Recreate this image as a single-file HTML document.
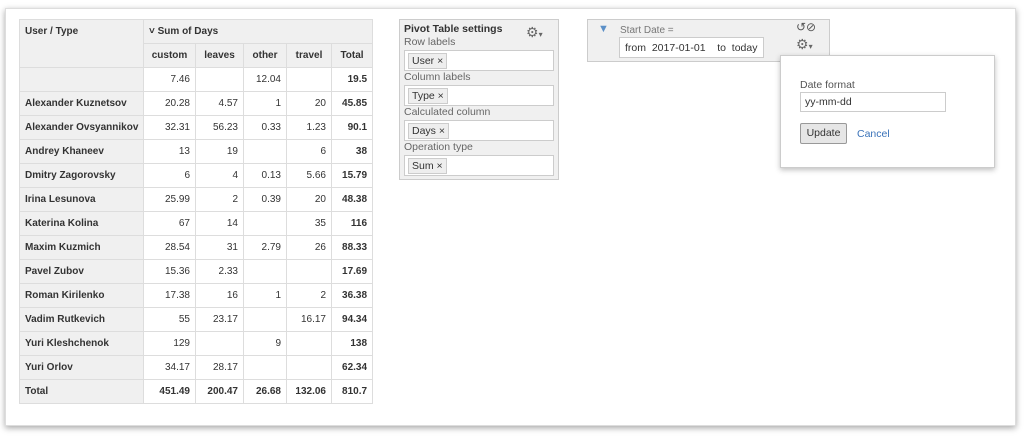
<!DOCTYPE html><html><head><style>
body{margin:0;width:1024px;height:443px;background:#fff;font-family:"Liberation Sans",sans-serif;font-size:10px;color:#333;position:relative;overflow:hidden}
.card{position:absolute;left:5px;top:8px;width:1009px;height:416px;background:#fff;box-shadow:0 2px 6px rgba(0,0,0,.35);border:1px solid #ddd}
table{position:absolute;left:19px;top:19px;border-collapse:collapse;table-layout:fixed;width:353px}
td{border:1px solid #ddd;height:23px;padding:0 5px;text-align:right;white-space:nowrap;overflow:hidden;font-size:10px}
td.h{background:#f0f0f0;font-weight:bold;text-align:left}
td.c{background:#f0f0f0;font-weight:bold;text-align:center;padding:0 2px}
td.b{font-weight:bold}
.set{position:absolute;left:399px;top:19px;width:160px;height:161px;background:#f0f0f0;border:1px solid #ccc;box-sizing:border-box;padding:3px 4px}
.set .t{font-weight:bold;font-size:10.5px;line-height:13px}
.set .l{color:#666;font-size:10.5px;line-height:13px;margin:0 0 1px}
.set .in{background:#fff;border:1px solid #ccc;height:21px;box-sizing:border-box;padding:2px 3px}
.tag{display:inline-block;background:#eee;border:1px solid #ccc;padding:0 3px;font-size:10.5px;line-height:14px;color:#333}
.gear{position:absolute;font-size:14px;color:#666}
.flt{position:absolute;left:587px;top:19px;width:243px;height:43px;background:#f0f0f0;border:1px solid #ccc;box-sizing:border-box}
.pop{position:absolute;left:780px;top:55px;width:215px;height:113px;background:#fff;border:1px solid #ccc;box-shadow:0 2px 5px rgba(0,0,0,.25);box-sizing:border-box}
</style></head><body>
<div class="card"></div>
<table>
<colgroup><col style="width:124px"><col style="width:52px"><col style="width:48px"><col style="width:43px"><col style="width:45px"><col style="width:41px"></colgroup>
<tr><td class="h" rowspan="2" style="vertical-align:top;padding-top:6px">User / Type</td><td class="h" colspan="5">˅ Sum of Days</td></tr>
<tr><td class="c">custom</td><td class="c">leaves</td><td class="c">other</td><td class="c">travel</td><td class="c">Total</td></tr>
<tr><td class="h"></td><td>7.46</td><td></td><td>12.04</td><td></td><td class="b">19.5</td></tr>
<tr><td class="h">Alexander Kuznetsov</td><td>20.28</td><td>4.57</td><td>1</td><td>20</td><td class="b">45.85</td></tr>
<tr><td class="h">Alexander Ovsyannikov</td><td>32.31</td><td>56.23</td><td>0.33</td><td>1.23</td><td class="b">90.1</td></tr>
<tr><td class="h">Andrey Khaneev</td><td>13</td><td>19</td><td></td><td>6</td><td class="b">38</td></tr>
<tr><td class="h">Dmitry Zagorovsky</td><td>6</td><td>4</td><td>0.13</td><td>5.66</td><td class="b">15.79</td></tr>
<tr><td class="h">Irina Lesunova</td><td>25.99</td><td>2</td><td>0.39</td><td>20</td><td class="b">48.38</td></tr>
<tr><td class="h">Katerina Kolina</td><td>67</td><td>14</td><td></td><td>35</td><td class="b">116</td></tr>
<tr><td class="h">Maxim Kuzmich</td><td>28.54</td><td>31</td><td>2.79</td><td>26</td><td class="b">88.33</td></tr>
<tr><td class="h">Pavel Zubov</td><td>15.36</td><td>2.33</td><td></td><td></td><td class="b">17.69</td></tr>
<tr><td class="h">Roman Kirilenko</td><td>17.38</td><td>16</td><td>1</td><td>2</td><td class="b">36.38</td></tr>
<tr><td class="h">Vadim Rutkevich</td><td>55</td><td>23.17</td><td></td><td>16.17</td><td class="b">94.34</td></tr>
<tr><td class="h">Yuri Kleshchenok</td><td>129</td><td></td><td>9</td><td></td><td class="b">138</td></tr>
<tr><td class="h">Yuri Orlov</td><td>34.17</td><td>28.17</td><td></td><td></td><td class="b">62.34</td></tr>
<tr><td class="h">Total</td><td class="b">451.49</td><td class="b">200.47</td><td class="b">26.68</td><td class="b">132.06</td><td class="b">810.7</td></tr>
</table>
<div class="set">
<div class="t">Pivot Table settings</div>
<span class="gear" style="left:126px;top:4px">⚙<span style="font-size:8px">▾</span></span>
<div class="l">Row labels</div><div class="in"><span class="tag">User ×</span></div>
<div class="l">Column labels</div><div class="in"><span class="tag">Type ×</span></div>
<div class="l">Calculated column</div><div class="in"><span class="tag">Days ×</span></div>
<div class="l">Operation type</div><div class="in"><span class="tag">Sum ×</span></div>
</div>
<div class="flt">
<span style="position:absolute;left:10px;top:3px;color:#5b8fc7;font-size:11px">▼</span>
<span style="position:absolute;left:32px;top:5px;color:#777;font-size:10px">Start Date =</span>
<div style="position:absolute;left:31px;top:17px;width:145px;height:21px;background:#fff;border:1px solid #ccc;box-sizing:border-box;padding:4px 5px;font-size:10.5px;white-space:nowrap">from&nbsp; 2017-01-01 &nbsp;&nbsp; to&nbsp; today</div>
<span style="position:absolute;left:208px;top:0px;font-size:12px;color:#555">↺⊘</span>
<span class="gear" style="left:208px;top:16px">⚙<span style="font-size:8px">▾</span></span>
</div>
<div class="pop">
<div style="position:absolute;left:19px;top:23px;color:#555;font-size:10.5px">Date format</div>
<div style="position:absolute;left:19px;top:36px;width:146px;height:20px;border:1px solid #ccc;box-sizing:border-box;padding:3px 4px;font-size:10.5px">yy-mm-dd</div>
<div style="position:absolute;left:19px;top:67px;width:47px;height:21px;background:#e6e6e6;border:1px solid #999;border-radius:2px;box-sizing:border-box;text-align:center;line-height:19px;font-size:10.5px">Update</div>
<div style="position:absolute;left:76px;top:72px;color:#3b73b9;font-size:10.5px">Cancel</div>
</div>
</body></html>
